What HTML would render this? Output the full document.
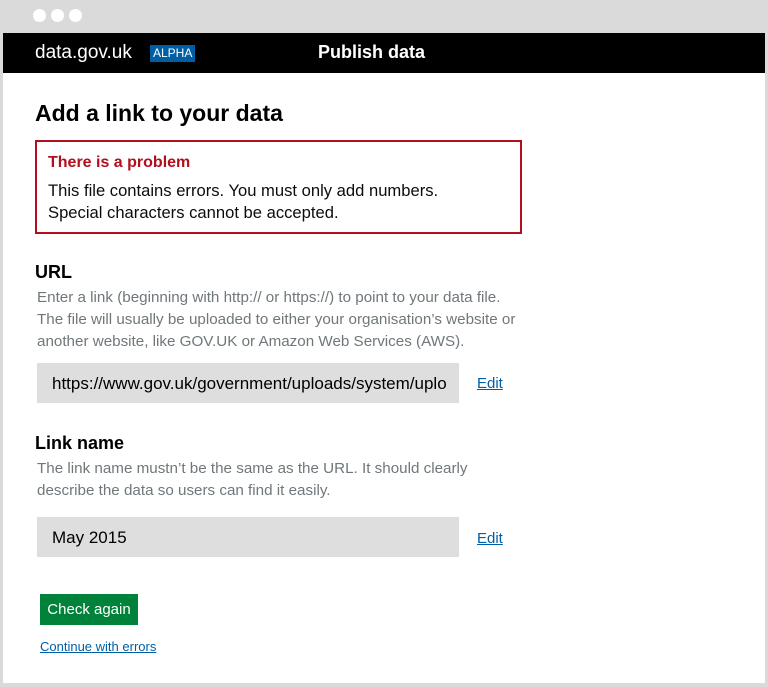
<!DOCTYPE html>
<html><head><style>
body{margin:0;width:768px;height:687px;background:#dadada;font-family:"Liberation Sans",Arial,sans-serif;position:relative;overflow:hidden}
.dot{position:absolute;top:9px;width:13px;height:13px;border-radius:50%;background:#fff}
.win{position:absolute;left:3px;top:33px;width:762px;height:650px;background:#fff}
.hdr{position:absolute;left:0;top:0;width:762px;height:40px;background:#000;color:#fff}
.a{position:absolute}
</style></head><body>
<div class="dot" style="left:33px"></div><div class="dot" style="left:51px"></div><div class="dot" style="left:69px"></div>
<div class="win">
<div class="hdr">
<div class="a" style="left:32px;top:9px;font-size:19px">data.gov.uk</div>
<div class="a" style="left:147px;top:12px;background:#005ea5;color:#fff;font-size:12px;padding:1px 3px;line-height:15px">ALPHA</div>
<div class="a" style="left:315px;top:9px;font-size:18px;font-weight:bold">Publish data</div>
</div>
<div class="a" style="left:32px;top:67px;font-size:23px;font-weight:bold">Add a link to your data</div>
<div class="a" style="left:32px;top:107px;width:483px;height:90px;border:2px solid #b10e1e">
<div class="a" style="left:11px;top:12px;color:#b10e1e;font-weight:bold;font-size:16px">There is a problem</div>
<div class="a" style="left:11px;top:38px;font-size:16.6px;line-height:22px;color:#0b0c0c">This file contains errors. You must only add numbers.<br>Special characters cannot be accepted.</div>
</div>
<div class="a" style="left:32px;top:229px;font-size:18px;font-weight:bold">URL</div>
<div class="a" style="left:34px;top:254px;font-size:15.2px;line-height:22px;color:#6f777b">Enter a link (beginning with http:// or https://) to point to your data file.<br>The file will usually be uploaded to either your organisation’s website or<br>another website, like GOV.UK or Amazon Web Services (AWS).</div>
<div class="a" style="left:34px;top:330px;width:422px;height:40px;background:#dedede;overflow:hidden"><div style="padding:11px 0 0 15px;font-size:17px;white-space:nowrap">https://www.gov.uk/government/uploads/system/uplo</div></div>
<div class="a" style="left:474px;top:342px;font-size:15px;color:#005ea5;text-decoration:underline">Edit</div>
<div class="a" style="left:32px;top:400px;font-size:18px;font-weight:bold">Link name</div>
<div class="a" style="left:34px;top:425px;font-size:15.2px;line-height:22px;color:#6f777b">The link name mustn’t be the same as the URL. It should clearly<br>describe the data so users can find it easily.</div>
<div class="a" style="left:34px;top:484px;width:422px;height:40px;background:#dedede"><div style="padding:11px 0 0 15px;font-size:17px">May 2015</div></div>
<div class="a" style="left:474px;top:497px;font-size:15px;color:#005ea5;text-decoration:underline">Edit</div>
<div class="a" style="left:37px;top:561px;width:98px;height:31px;background:#00823b;color:#fff;font-size:15px;line-height:31px;text-align:center">Check again</div>
<div class="a" style="left:37px;top:606px;font-size:13px;color:#005ea5;text-decoration:underline">Continue with errors</div>
</div>
</body></html>
